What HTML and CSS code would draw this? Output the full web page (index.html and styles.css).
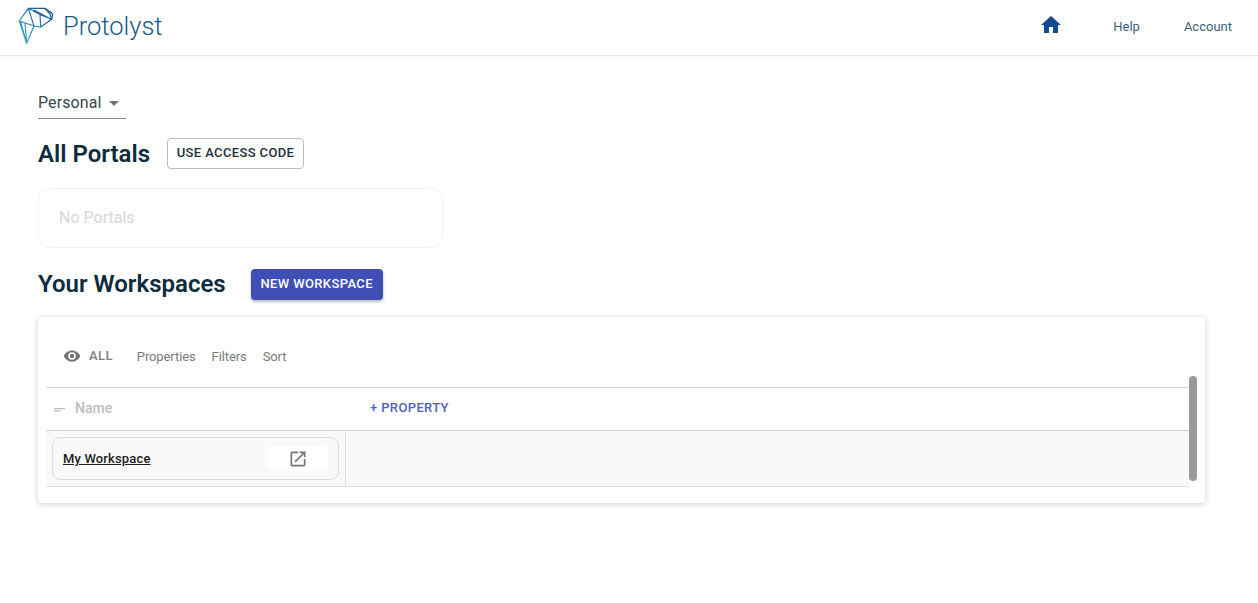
FILE: index.html
```html
<!DOCTYPE html>
<html lang="en">
<head>
<meta charset="utf-8">
<title>Protolyst</title>
<link rel="stylesheet" href="styles.css">
</head>
<body>
<header class="topbar">
  <div class="brand">
    <svg class="logo" width="36" height="38" viewBox="18 5 36 38" fill="none" stroke-width="1.2" stroke-linejoin="round">
      <defs><linearGradient id="lg" gradientUnits="userSpaceOnUse" x1="22" y1="40" x2="50" y2="8"><stop offset="0" stop-color="#45a6cc"/><stop offset=".55" stop-color="#2a78ac"/><stop offset="1" stop-color="#134a8e"/></linearGradient></defs>
      <path stroke="url(#lg)" d="M28.300 7.300 45 7.300 52.700 12.700 51.700 18.300 40.700 26 34 25 26.700 42.300 19.300 20Z"/>
      <path stroke="url(#lg)" d="M28.300 7.300 34 25M19.300 20 34 25M20.500 20.500 26.700 42.300M25 22 26.700 42.300M34 9 50.500 18M28.300 7.300 40 13.500 40.700 26M40 13.500 51.700 18.300M45 7.300 50 13 51.700 18.300"/>
    </svg>
    <span class="brand-name">Protolyst</span>
  </div>
  <nav class="nav">
    <svg class="home" width="24" height="24" viewBox="0 0 24 24"><path fill="#134a8e" d="M10 20v-6h4v6h5v-8h3L12 3 2 12h3v8z"/></svg>
    <a class="nav-link nav-help">Help</a>
    <a class="nav-link">Account</a>
  </nav>
</header>
<main class="page">
  <div class="select"><span>Personal</span><i class="caret"></i></div>
  <div class="heading-row portals-head">
    <h2 class="heading">All Portals</h2>
    <button class="btn btn-outline">USE ACCESS CODE</button>
  </div>
  <div class="empty">No Portals</div>
  <div class="heading-row workspaces-head">
    <h2 class="heading">Your Workspaces</h2>
    <button class="btn btn-primary">NEW WORKSPACE</button>
  </div>
  <section class="card">
    <div class="toolbar">
      <svg class="eye" width="18" height="18" viewBox="0 0 24 24"><path fill="#757575" d="M12 4.500C7 4.500 2.700 7.600 1 12c1.700 4.400 6 7.500 11 7.500s9.300-3.100 11-7.500c-1.700-4.400-6-7.500-11-7.500zM12 17a5 5 0 1 1 0-10 5 5 0 0 1 0 10zm0-8a3 3 0 1 0 0 6 3 3 0 0 0 0-6z"/></svg>
      <span class="all">ALL</span>
      <span class="tool">Properties</span>
      <span class="tool">Filters</span>
      <span class="tool">Sort</span>
    </div>
    <div class="table-wrap">
      <div class="table">
        <div class="thead">
          <div class="name-head">
            <svg width="11" height="5" viewBox="0 0 11 5"><path fill="#bdbdbd" d="M0 1h11v1.200H0zM0 3.300h6.500v1.200H0z"/></svg>
            <span>Name</span>
          </div>
          <span class="add-prop">+ PROPERTY</span>
        </div>
        <div class="row">
          <div class="cell-name">
            <div class="chip">
              <a class="ws-link">My Workspace</a>
              <span class="open-btn">
                <svg width="20" height="20" viewBox="0 0 24 24"><path fill="#757575" d="M19 19H5V5h7V3H5a2 2 0 0 0-2 2v14a2 2 0 0 0 2 2h14a2 2 0 0 0 2-2v-7h-2v7zM14 3v2h3.590l-9.830 9.830 1.410 1.410L19 6.410V10h2V3h-7z"/></svg>
              </span>
            </div>
          </div>
          <div class="cell-rest"></div>
        </div>
      </div>
      <div class="scrollbar"><div class="thumb"></div></div>
    </div>
  </section>
</main>
</body>
</html>
```
FILE: styles.css
```css
* { box-sizing: border-box; }
html, body { margin: 0; height: 100%; overflow: hidden; }
body { background: #fff; font-family: Roboto, "Liberation Sans", sans-serif; color: #102a3a; }

.topbar { height: 56px; display: flex; align-items: center; justify-content: space-between; border-bottom: 1px solid #e9e9e9; box-shadow: 0 1px 2px rgba(0,0,0,.03); padding: 0 26px 0 18px; }
.brand { display: flex; align-items: center; height: 100%; }
.logo { display: block; margin-top: -6px; }
.brand-name { font-size: 25.5px; font-weight: 300; color: #16598a; margin-left: 9px; margin-top: -4px; }
.nav { display: flex; align-items: center; margin-top: -3px; }
.home { display: block; margin-right: 50px; margin-top: -2px; }
.nav-link { font-size: 13px; color: #3c5f7d; }
.nav-help { margin-right: 44px; }

.page { padding: 31px 53px 0 38px; }
.select { width: 88px; height: 32px; border-bottom: 1px solid #8a8a8a; display: flex; align-items: center; font-size: 16px; letter-spacing: .1px; color: #37474f; }
.caret { width: 0; height: 0; border: 5px solid transparent; border-top-color: #757575; border-bottom-width: 0; margin-left: 7px; margin-top: 2px; }

.heading-row { display: flex; align-items: center; }
.portals-head { margin-top: 19px; height: 31px; }
.workspaces-head { margin-top: 20px; height: 32px; }
.heading { margin: 0; font-size: 24px; font-weight: 600; color: #0c2b3d; }
.portals-head .heading { margin-right: 17px; }
.workspaces-head .heading { margin-right: 25px; margin-top: -1px; }

.btn { font-family: inherit; font-size: 13px; font-weight: 500; letter-spacing: .37px; border-radius: 4px; padding: 0 0 2px; display: flex; align-items: center; justify-content: center; }
.btn-outline { width: 137px; height: 31px; background: #fff; border: 1px solid #bdbdbd; color: #212f38; }
.btn-primary { width: 132px; height: 31px; background: #3f4fb5; border: 0; color: #fff; box-shadow: 0 2px 3px rgba(0,0,0,.28); }

.empty { width: 405px; height: 60px; margin-top: 19px; padding-bottom: 2px; border: 1px solid #f3f3f3; border-radius: 12px; display: flex; align-items: center; padding-left: 20px; font-size: 16px; color: #d6d6d6; }

.card { height: 186px; margin-top: 17px; background: #fff; border-radius: 4px; box-shadow: 0 1px 6px rgba(0,0,0,.2); padding: 0 8px; display: flex; flex-direction: column; }
.toolbar { height: 70px; display: flex; align-items: center; padding: 8px 0 0 17px; color: #757575; font-size: 13px; flex: none; }
.eye { display: block; margin-right: 8px; margin-top: -1px; }
.all { font-size: 13px; font-weight: 500; letter-spacing: .37px; color: #808080; margin-right: 24px; margin-top: -1px; }
.tool { margin-right: 16px; color: #7a7a7a; font-size: 13px; letter-spacing: -.1px; }

.table-wrap { display: flex; flex: none; position: relative; }
.table { width: 1143px; flex: none; }
.thead { height: 44px; padding-bottom: 2px; border-top: 1px solid #d2d2d2; border-bottom: 1px solid #d2d2d2; display: flex; align-items: center; }
.name-head { width: 324px; display: flex; align-items: center; padding-left: 8px; font-size: 14px; font-weight: 500; color: #bdbdbd; }
.name-head svg { margin-right: 10px; margin-top: 2px; }
.add-prop { font-size: 13px; font-weight: 500; letter-spacing: .37px; color: #5260bc; margin-top: -1px; }
.row { height: 56px; background: #f9f9f9; border-bottom: 1px solid #dcdcdc; display: flex; }
.cell-name { width: 300px; border-right: 1px solid #dedede; padding: 6px; flex: none; }
.chip { height: 43px; border: 1px solid #dddddd; border-radius: 8px; display: flex; align-items: center; justify-content: space-between; padding: 0 10px; }
.ws-link { font-size: 13px; font-weight: 500; letter-spacing: .15px; color: #1c1c1c; text-decoration: underline; }
.open-btn { width: 60px; height: 25px; background: #fff; border-radius: 5px; display: flex; align-items: center; justify-content: center; }
.cell-rest { flex: 1; }
.scrollbar { width: 8px; position: absolute; left: 1143px; top: -11px; }
.thumb { height: 105px; background: #999; border-radius: 4px; }
```
